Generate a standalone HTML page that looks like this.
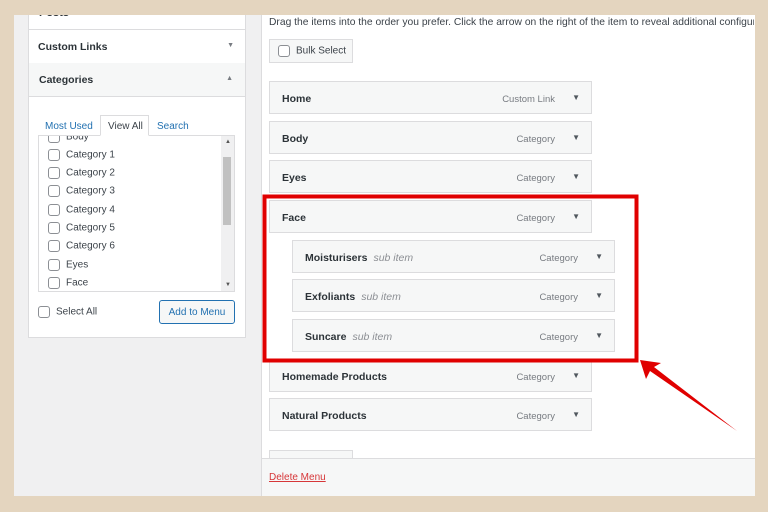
<!DOCTYPE html>
<html><head><style>
*{box-sizing:border-box;margin:0;padding:0}
body{width:768px;height:512px;background:#e4d5bf;position:relative;overflow:hidden;font-family:"Liberation Sans",sans-serif;font-size:10px;color:#3c434a}
.abs{position:absolute}
.item{position:absolute;background:#f6f7f7;border:1px solid #dcdcde;height:33px;font-weight:bold;font-size:10.5px;padding:11px 12px;color:#2c3338;white-space:nowrap}
.item .t{position:absolute;right:36px;top:12px;font-weight:normal;font-size:9.5px;color:#787c82}
.item .a{position:absolute;right:11px;top:11px;font-size:8px;color:#50575e;font-weight:normal}
.item i{font-weight:normal;color:#8c8f94;margin-left:6px}
.cb{display:inline-block;width:12px;height:12px;border:1px solid #8c8f94;border-radius:3px;background:#fff;vertical-align:middle}
.li{position:absolute;left:48px;font-size:10px;color:#3c434a;white-space:nowrap}
.li .cb{margin-right:6px}
</style></head><body>
<div class="abs" style="left:14px;top:15px;width:247px;height:481px;background:#f0f0f1"></div>
<div class="abs" style="left:28px;top:15px;width:218px;height:323px;background:#fff;border:1px solid #dcdcde;border-top:none;overflow:hidden">
<div class="abs" style="left:10px;top:-8px;font-weight:bold;font-size:11px;color:#2c3338">Posts</div>
</div>
<div class="abs" style="left:28px;top:29px;width:218px;height:35px;border-top:1px solid #dcdcde;border-bottom:1px solid #dcdcde;padding:11px 10px;font-weight:bold;font-size:10.5px;color:#2c3338">Custom Links<span style="position:absolute;right:12px;top:12px;font-size:7px;color:#787c82">▼</span></div>
<div class="abs" style="left:28px;top:63px;width:218px;height:34px;background:#f6f7f7;border:1px solid #dcdcde;border-top:none;padding:11px 10px;font-weight:bold;font-size:10.5px;color:#2c3338">Categories<span style="position:absolute;right:12px;top:12px;font-size:7px;color:#787c82">▲</span></div>
<div class="abs" style="left:45px;top:121px;color:#2271b1;font-size:10px">Most Used</div>
<div class="abs" style="left:100px;top:115px;width:49px;height:21px;border:1px solid #dcdcde;border-bottom:1px solid #fff;background:#fff;padding:5px 0 0 7px;font-size:10px;z-index:2">View All</div>
<div class="abs" style="left:157px;top:121px;color:#2271b1;font-size:10px">Search</div>
<div class="abs" style="left:38px;top:135px;width:197px;height:157px;border:1px solid #dcdcde;overflow:hidden">
<div class="abs" style="right:0;top:0;width:13px;height:155px;background:#f0f0f1"></div>
<div class="abs" style="right:3px;top:21px;width:8px;height:68px;background:#c1c1c1"></div>
<div class="abs" style="right:3px;top:3px;font-size:6px;color:#555">▲</div>
<div class="abs" style="right:3px;bottom:3px;font-size:6px;color:#555">▼</div>
</div>
<div class="li" style="top:131px;clip-path:inset(5px 0 0 0)"><span class="cb"></span>Body</div>
<div class="li" style="top:149px"><span class="cb"></span>Category 1</div>
<div class="li" style="top:167px"><span class="cb"></span>Category 2</div>
<div class="li" style="top:185px"><span class="cb"></span>Category 3</div>
<div class="li" style="top:204px"><span class="cb"></span>Category 4</div>
<div class="li" style="top:222px"><span class="cb"></span>Category 5</div>
<div class="li" style="top:240px"><span class="cb"></span>Category 6</div>
<div class="li" style="top:259px"><span class="cb"></span>Eyes</div>
<div class="li" style="top:277px"><span class="cb"></span>Face</div>
<div class="li" style="top:306px;left:38px"><span class="cb"></span>Select All</div>
<div class="abs" style="left:159px;top:300px;width:76px;height:24px;border:1px solid #2271b1;border-radius:3px;background:#f6f7f7;color:#2271b1;font-size:10px;padding:6px 0;text-align:center">Add to Menu</div>

<div class="abs" style="left:261px;top:15px;width:494px;height:481px;background:#fff;border-left:1px solid #dcdcde"></div>
<div class="abs" style="left:269px;top:17px;font-size:10.3px;white-space:nowrap;width:485px;overflow:hidden;color:#3c434a">Drag the items into the order you prefer. Click the arrow on the right of the item to reveal additional configur</div>
<div class="abs" style="left:269px;top:39px;width:84px;height:24px;border:1px solid #dcdcde;background:#f6f7f7;padding:5px 8px;font-size:10px;white-space:nowrap"><span class="cb" style="margin-right:6px"></span>Bulk Select</div>

<div class="item" style="left:269px;top:81px;width:323px">Home<span class="t">Custom Link</span><span class="a">▼</span></div>
<div class="item" style="left:269px;top:121px;width:323px">Body<span class="t">Category</span><span class="a">▼</span></div>
<div class="item" style="left:269px;top:160px;width:323px">Eyes<span class="t">Category</span><span class="a">▼</span></div>
<div class="item" style="left:269px;top:200px;width:323px">Face<span class="t">Category</span><span class="a">▼</span></div>
<div class="item" style="left:292px;top:240px;width:323px">Moisturisers<i>sub item</i><span class="t">Category</span><span class="a">▼</span></div>
<div class="item" style="left:292px;top:279px;width:323px">Exfoliants<i>sub item</i><span class="t">Category</span><span class="a">▼</span></div>
<div class="item" style="left:292px;top:319px;width:323px">Suncare<i>sub item</i><span class="t">Category</span><span class="a">▼</span></div>
<div class="item" style="left:269px;top:359px;width:323px">Homemade Products<span class="t">Category</span><span class="a">▼</span></div>
<div class="item" style="left:269px;top:398px;width:323px">Natural Products<span class="t">Category</span><span class="a">▼</span></div>
<div class="abs" style="left:269px;top:450px;width:84px;height:10px;border:1px solid #dcdcde;border-bottom:none;background:#f6f7f7"></div>
<div class="abs" style="left:262px;top:458px;width:493px;height:38px;background:#f6f7f7;border-top:1px solid #dcdcde"></div>
<div class="abs" style="left:269px;top:472px;color:#d63638;text-decoration:underline;font-size:10px">Delete Menu</div>

<svg class="abs" style="left:0;top:0" width="768" height="512">
<rect x="264.5" y="196.5" width="372" height="164" fill="none" stroke="#e00000" stroke-width="4"/>
<polygon points="640,360 661,363 654,367 737,431 650,371 646,379" fill="#e00000"/>
</svg>
</body></html>
